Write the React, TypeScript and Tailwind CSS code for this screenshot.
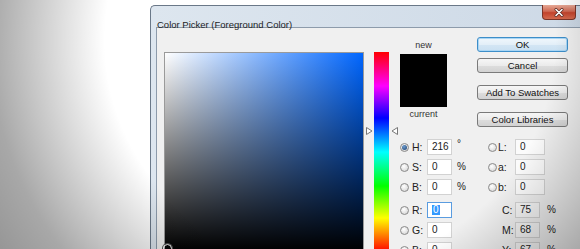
import React from 'react';

// One row in the HSB / Lab / RGB / CMYK grid
const Radio = ({ on = false }: { on?: boolean }) => (
  <span className="relative flex h-[9px] w-[9px] shrink-0 items-center justify-center rounded-full border border-[#8a8a8a] bg-[radial-gradient(circle_at_40%_35%,#ffffff,#cfcfcf)]">
    {on && <span className="h-[5px] w-[5px] rounded-full bg-[radial-gradient(circle_at_40%_35%,#6b9bd0,#1b3f6b)]" />}
  </span>
);

const Field = ({
  value,
  width,
  selected = false,
  tint = 'bg-white',
}: {
  value: string;
  width: string;
  selected?: boolean;
  tint?: string;
}) => (
  <span
    className={`flex h-[16px] items-center border pl-[4px] text-[10px] leading-none text-[#222] ${width} ${tint} ${
      selected ? 'border-[#5a9ce0]' : 'border-[#d2d2d2]'
    }`}
  >
    {selected ? <span className="bg-[#3399ff] px-[1px] text-white">{value}</span> : value}
  </span>
);

const Label = ({ text, w }: { text: string; w: string }) => (
  <span className={`text-[10.5px] leading-none text-[#222] ${w}`}>{text}</span>
);

const Button = ({ label, primary = false }: { label: string; primary?: boolean }) => (
  <div
    className={`flex h-[15px] w-[91px] items-center justify-center rounded-[3px] border text-[9.5px] leading-none text-[#111] ${
      primary
        ? 'border-[#3d8ec9] bg-[linear-gradient(#f0f7fc,#e3eff8_50%,#d4e6f4_51%,#c9e0f2)] shadow-[inset_0_0_0_1px_#a9d6f5]'
        : 'border-[#7a7a7a] bg-[linear-gradient(#f6f6f6,#ebebeb_50%,#dddddd_51%,#d2d2d2)]'
    }`}
  >
    {label}
  </div>
);

export default function App() {
  return (
    <div className="relative h-[249px] w-[580px] overflow-hidden bg-white font-['Liberation_Sans',Arial,sans-serif]">
      <div className="ml-[150px] mt-[5px] w-[440px] rounded-tl-[5px] border-l border-t border-[#6a7888] bg-[linear-gradient(to_right,#dde6ef,#cdd9e6)] pl-[5px]">
        {/* title bar */}
        <div className="relative h-[21px] pl-[1px] pt-[5px]">
          <span className="text-[9.5px] leading-[11px] text-[#1e1e1e]">Color Picker (Foreground Color)</span>
          <div className="absolute right-[14px] top-[-1px] flex h-[15px] w-[34px] items-center justify-center rounded-b-[4px] border border-t-0 border-[#7a3528] bg-[linear-gradient(#e6a895,#d06a54_45%,#c2432c_55%,#d46a4e)]">
            <svg width="10" height="9" viewBox="0 0 10 9">
              <path d="M2 1.5 L8 7.5 M8 1.5 L2 7.5" stroke="#5a2a22" strokeWidth="3" strokeLinecap="round" />
              <path d="M2 1.5 L8 7.5 M8 1.5 L2 7.5" stroke="#ffffff" strokeWidth="1.6" strokeLinecap="round" />
            </svg>
          </div>
        </div>

        {/* client area */}
        <div className="flex h-[230px] items-start border-l border-t border-[#8d9bab] bg-[#f0f0f0]">
          {/* saturation / brightness field */}
          <div className="relative ml-[7px] mt-[24px] h-[200px] w-[200px] shrink-0 border border-[#9a9a9a] bg-[linear-gradient(to_top,#000000,rgba(0,0,0,0)),linear-gradient(to_right,#ffffff,#0066ff)]">
            <span className="absolute left-[-2px] top-[191px] h-[9px] w-[9px] rounded-full border border-white shadow-[0_0_0_1px_#555]" />
          </div>

          {/* hue strip */}
          <div className="relative ml-[10px] mt-[24px] h-[200px] w-[15px] shrink-0 bg-[linear-gradient(#ff0000,#ff00ff_17%,#0000ff_33%,#00ffff_50%,#00ff00_67%,#ffff00_83%,#ff0000)]">
            <svg className="absolute left-[-8px] top-[75px]" width="7" height="8" viewBox="0 0 7 8">
              <path d="M0.5 0.5 L6 4 L0.5 7.5 Z" fill="#fff" stroke="#777" strokeWidth="1" />
            </svg>
            <svg className="absolute right-[-9px] top-[75px]" width="7" height="8" viewBox="0 0 7 8">
              <path d="M6.5 0.5 L1 4 L6.5 7.5 Z" fill="#fff" stroke="#777" strokeWidth="1" />
            </svg>
          </div>

          {/* right side */}
          <div className="ml-[11px] flex flex-col pt-[9px]">
            <div className="flex items-start">
              <div className="mt-[3px] flex w-[47px] flex-col items-center">
                <span className="text-[9px] leading-[11px] text-[#333]">new</span>
                <div className="mt-[3px] h-[53px] w-[47px] bg-black" />
                <span className="mt-[2px] text-[9px] leading-[11px] text-[#333]">current</span>
              </div>
              <div className="ml-[30px] flex flex-col">
                <Button label="OK" primary />
                <div className="mt-[6px]">
                  <Button label="Cancel" />
                </div>
                <div className="mt-[12px]">
                  <Button label="Add To Swatches" />
                </div>
                <div className="mt-[12px]">
                  <Button label="Color Libraries" />
                </div>
              </div>
            </div>

            {/* value grid */}
            <div className="mt-[12px] flex flex-col gap-[4px]">
              <div className="flex items-center">
                <div className="flex w-[88px] items-center">
                  <Radio on />
                  <span className="ml-[3px]" />
                  <Label text="H:" w="w-[15px]" />
                  <Field value="216" width="w-[25px]" />
                  <span className="ml-[5px] self-start text-[10px] leading-none text-[#222]">°</span>
                </div>
                <Radio />
                <Label text="L:" w="w-[17px] ml-[1px]" />
                <Field value="0" width="w-[30px]" tint="bg-[#fbfbfb]" />
              </div>
              <div className="flex items-center">
                <div className="flex w-[88px] items-center">
                  <Radio />
                  <span className="ml-[3px]" />
                  <Label text="S:" w="w-[15px]" />
                  <Field value="0" width="w-[25px]" />
                  <span className="ml-[5px] text-[10px] leading-none text-[#222]">%</span>
                </div>
                <Radio />
                <Label text="a:" w="w-[17px] ml-[1px]" />
                <Field value="0" width="w-[30px]" tint="bg-[#fbfbfb]" />
              </div>
              <div className="flex items-center">
                <div className="flex w-[88px] items-center">
                  <Radio />
                  <span className="ml-[3px]" />
                  <Label text="B:" w="w-[15px]" />
                  <Field value="0" width="w-[25px]" />
                  <span className="ml-[5px] text-[10px] leading-none text-[#222]">%</span>
                </div>
                <Radio />
                <Label text="b:" w="w-[17px] ml-[1px]" />
                <Field value="0" width="w-[30px]" tint="bg-[#fbfbfb]" />
              </div>
              <div className="mt-[3px] flex items-center">
                <div className="flex w-[88px] items-center">
                  <Radio />
                  <span className="ml-[3px]" />
                  <Label text="R:" w="w-[15px]" />
                  <Field value="0" width="w-[25px]" selected />
                </div>
                <span className="w-[14px]" />
                <Label text="C:" w="w-[13px]" />
                <Field value="75" width="w-[25px]" tint="bg-[#f6f6f6]" />
                <span className="ml-[7px] text-[10px] leading-none text-[#222]">%</span>
              </div>
              <div className="flex items-center">
                <div className="flex w-[88px] items-center">
                  <Radio />
                  <span className="ml-[3px]" />
                  <Label text="G:" w="w-[15px]" />
                  <Field value="0" width="w-[25px]" />
                </div>
                <span className="w-[14px]" />
                <Label text="M:" w="w-[13px]" />
                <Field value="68" width="w-[25px]" tint="bg-[#f6f6f6]" />
                <span className="ml-[7px] text-[10px] leading-none text-[#222]">%</span>
              </div>
              <div className="flex items-center">
                <div className="flex w-[88px] items-center">
                  <Radio />
                  <span className="ml-[3px]" />
                  <Label text="B:" w="w-[15px]" />
                  <Field value="0" width="w-[25px]" />
                </div>
                <span className="w-[14px]" />
                <Label text="Y:" w="w-[13px]" />
                <Field value="67" width="w-[25px]" tint="bg-[#f6f6f6]" />
                <span className="ml-[7px] text-[10px] leading-none text-[#222]">%</span>
              </div>
            </div>
          </div>
        </div>
      </div>

      {/* photo vignette over the whole shot */}
      <div className="pointer-events-none absolute inset-0 bg-[radial-gradient(circle_at_330px_40px,rgba(0,0,0,0)_225px,rgba(0,0,0,0.34)_340px,rgba(0,0,0,0.45)_420px)]" />
    </div>
  );
}
